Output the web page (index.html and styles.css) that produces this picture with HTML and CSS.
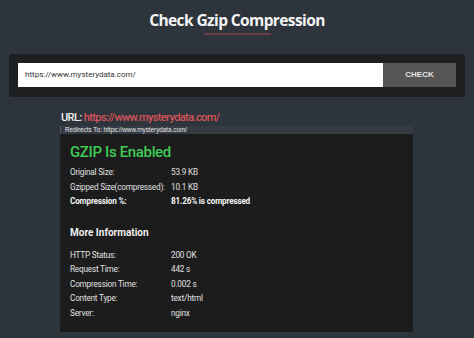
FILE: index.html
```html
<!DOCTYPE html>
<html>
<head>
<meta charset="utf-8">
<link rel="stylesheet" href="styles.css">
</head>
<body>
<header class="header">
  <h1 class="title">Check Gzip Compression</h1>
  <div class="underline"></div>
</header>
<section class="search">
  <div class="input">https://www.mysterydata.com/</div>
  <div class="btn">CHECK</div>
</section>
<section class="result">
  <div class="url"><span class="url-label">URL:</span> <span class="url-link">https://www.mysterydata.com/</span></div>
  <div class="redirect">Redirects To: https://www.mysterydata.com/</div>
  <div class="box">
    <h2 class="enabled">GZIP Is Enabled</h2>
    <div class="rows">
      <div class="row"><span class="lbl">Original Size:</span><span>53.9 KB</span></div>
      <div class="row"><span class="lbl">Gzipped Size(compressed):</span><span>10.1 KB</span></div>
      <div class="row bold"><span class="lbl">Compression %:</span><span>81.26% is compressed</span></div>
    </div>
    <h3 class="more">More Information</h3>
    <div class="rows">
      <div class="row"><span class="lbl">HTTP Status:</span><span>200 OK</span></div>
      <div class="row"><span class="lbl">Request Time:</span><span>442 s</span></div>
      <div class="row"><span class="lbl">Compression Time:</span><span>0.002 s</span></div>
      <div class="row"><span class="lbl">Content Type:</span><span>text/html</span></div>
      <div class="row"><span class="lbl">Server:</span><span>nginx</span></div>
    </div>
  </div>
</section>
</body>
</html>
```
FILE: styles.css
```css
html, body {
  margin: 0;
  padding: 0;
}
body {
  background: #2e343b;
  width: 474px;
  height: 338px;
  overflow: hidden;
  font-family: Roboto, "Liberation Sans", Arial, sans-serif;
  color: #dcdcdc;
}
.header {
  display: flex;
  flex-direction: column;
  align-items: center;
  padding-top: 10px;
}
.title {
  margin: 0;
  font-family: "Open Sans", "DejaVu Sans", sans-serif;
  font-weight: 700;
  font-size: 15.5px;
  letter-spacing: -0.6px;
  line-height: 21px;
  color: #f4f4f4;
}
.underline {
  margin-top: 2px;
  width: 67px;
  height: 2px;
  background: #6a3e4b;
}
.search {
  display: flex;
  margin: 19px 9px 0 9px;
  padding: 9px 9px 10px 9px;
  background: #1e1f20;
  border-radius: 2px;
}
.input {
  flex: 1;
  height: 24px;
  background: #fff;
  color: #333;
  font-size: 8px;
  line-height: 24px;
  padding-left: 7px;
}
.btn {
  width: 73px;
  height: 24px;
  background: #555;
  color: #e6e6e6;
  font-family: "Liberation Sans", Arial, sans-serif;
  font-weight: 700;
  font-size: 8px;
  line-height: 24px;
  text-align: center;
}
.result {
  margin: 14px 0 0 60px;
  width: 353px;
}
.url {
  font-size: 11px;
  letter-spacing: -0.6px;
  line-height: 14px;
  padding-left: 1px;
  font-weight: 500;
}
.url-label {
  color: #f0f0f0;
}
.url-link {
  color: #d9535a;
}
.redirect {
  margin-top: 1px;
  height: 8px;
  line-height: 8px;
  font-size: 6.3px;
  padding-left: 4px;
  background: #353b43;
  border-left: 1px solid #555c64;
  color: #e8e8e8;
  font-family: "Liberation Sans", Arial, sans-serif;
}
.box {
  background: #1c1c1c;
  height: 198px;
  padding: 8px 10px 0 10px;
  box-sizing: border-box;
}
.enabled {
  margin: 0;
  font-size: 15px;
  letter-spacing: -0.35px;
  line-height: 20px;
  font-weight: 500;
  color: #3fcc55;
}
.rows {
  display: flex;
  flex-direction: column;
  margin-top: 3px;
}
.row {
  display: flex;
  font-size: 8.2px;
  letter-spacing: -0.2px;
  line-height: 14.5px;
  color: #e0e0e0;
}
.row.bold {
  font-weight: 700;
  color: #f2f2f2;
}
.lbl {
  width: 101px;
}
.more {
  margin: 17px 0 0 0;
  font-size: 10px;
  line-height: 14px;
  font-weight: 700;
  color: #eeeeee;
}
.more + .rows {
  margin-top: 8px;
}
```
